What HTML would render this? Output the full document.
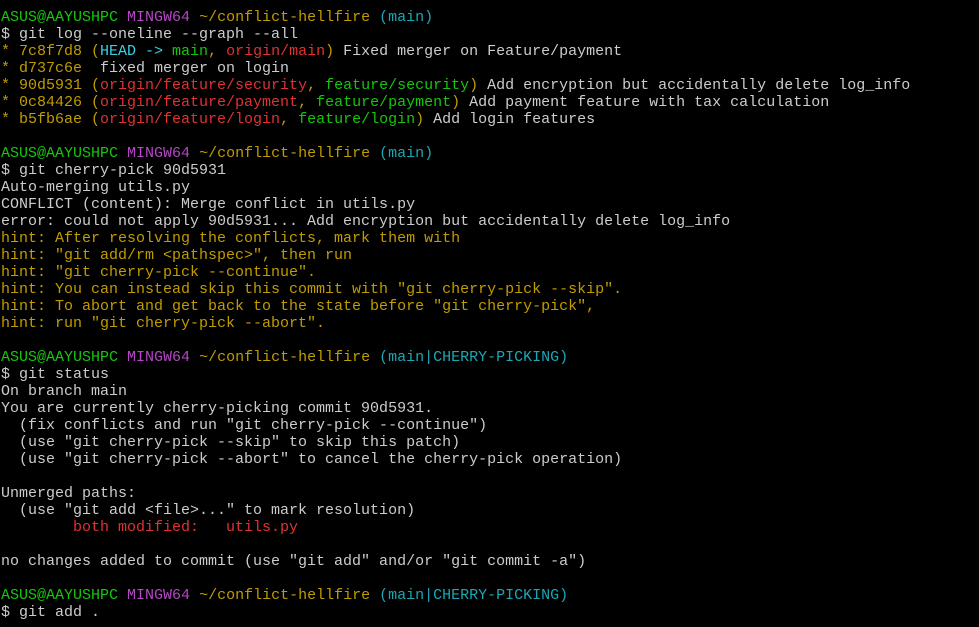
<html><head><style>
body{margin:0;background:#000;width:979px;height:627px;overflow:hidden}
pre{margin:0;padding:9px 0 0 1px;font-family:"Liberation Mono",monospace;font-size:15px;line-height:17px;color:#cccccc}
.g{color:#1cc41c}.m{color:#b547c6}.y{color:#c19c00}.c{color:#1aa7b5}.r{color:#e8575c}.G{color:#16c60c}.H{color:#3ad0e8}.R{color:#e03232}
</style></head><body><pre><span class="g">ASUS@AAYUSHPC</span> <span class="m">MINGW64</span> <span class="y">~/conflict-hellfire</span> <span class="c">(main)</span>
$ git log --oneline --graph --all
<span class="y">* 7c8f7d8 (</span><span class="H">HEAD -&gt; </span><span class="G">main</span><span class="y">, </span><span class="r">origin/main</span><span class="y">)</span> Fixed merger on Feature/payment
<span class="y">* d737c6e</span>  fixed merger on login
<span class="y">* 90d5931 (</span><span class="r">origin/feature/security</span><span class="y">, </span><span class="G">feature/security</span><span class="y">)</span> Add encryption but accidentally delete log_info
<span class="y">* 0c84426 (</span><span class="r">origin/feature/payment</span><span class="y">, </span><span class="G">feature/payment</span><span class="y">)</span> Add payment feature with tax calculation
<span class="y">* b5fb6ae (</span><span class="r">origin/feature/login</span><span class="y">, </span><span class="G">feature/login</span><span class="y">)</span> Add login features

<span class="g">ASUS@AAYUSHPC</span> <span class="m">MINGW64</span> <span class="y">~/conflict-hellfire</span> <span class="c">(main)</span>
$ git cherry-pick 90d5931
Auto-merging utils.py
CONFLICT (content): Merge conflict in utils.py
error: could not apply 90d5931... Add encryption but accidentally delete log_info
<span class="y">hint: After resolving the conflicts, mark them with
hint: "git add/rm &lt;pathspec&gt;", then run
hint: "git cherry-pick --continue".
hint: You can instead skip this commit with "git cherry-pick --skip".
hint: To abort and get back to the state before "git cherry-pick",
hint: run "git cherry-pick --abort".</span>

<span class="g">ASUS@AAYUSHPC</span> <span class="m">MINGW64</span> <span class="y">~/conflict-hellfire</span> <span class="c">(main|CHERRY-PICKING)</span>
$ git status
On branch main
You are currently cherry-picking commit 90d5931.
  (fix conflicts and run "git cherry-pick --continue")
  (use "git cherry-pick --skip" to skip this patch)
  (use "git cherry-pick --abort" to cancel the cherry-pick operation)

Unmerged paths:
  (use "git add &lt;file&gt;..." to mark resolution)
<span class="R">        both modified:   utils.py</span>

no changes added to commit (use "git add" and/or "git commit -a")

<span class="g">ASUS@AAYUSHPC</span> <span class="m">MINGW64</span> <span class="y">~/conflict-hellfire</span> <span class="c">(main|CHERRY-PICKING)</span>
$ git add .
</pre></body></html>
